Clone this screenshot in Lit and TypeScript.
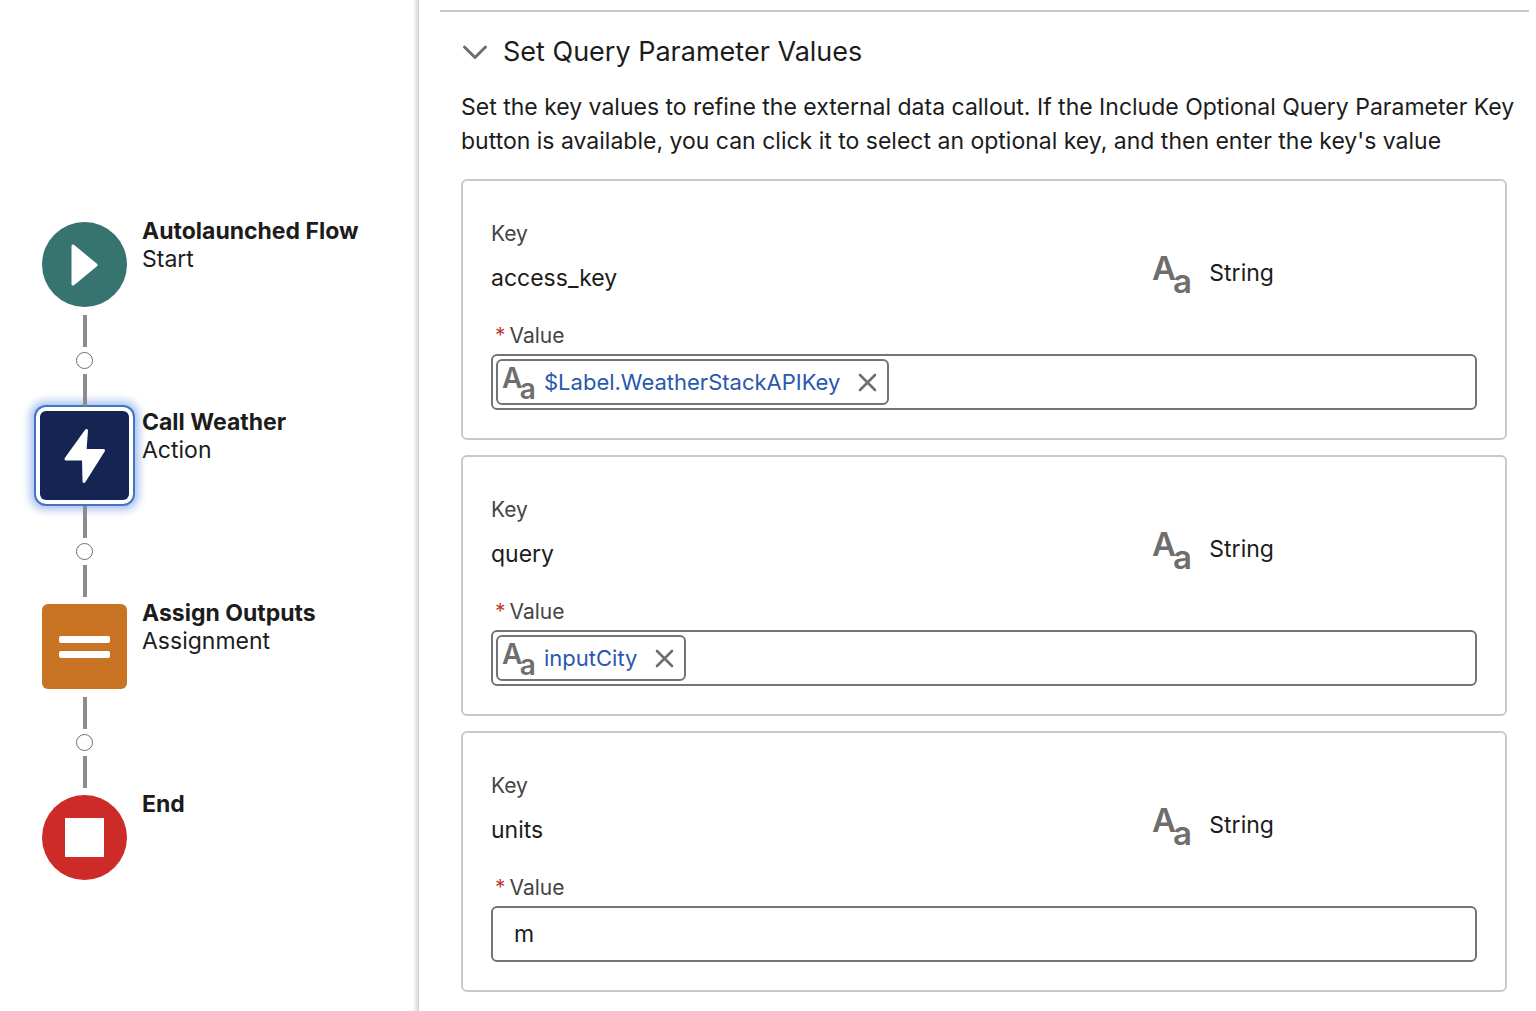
import { LitElement, html, css, svg, nothing } from "lit";
import { customElement, property } from "lit/decorators.js";
import { classMap } from "lit/directives/class-map.js";

type NodeKind = "start" | "action" | "assignment" | "end";

interface FlowStep {
  kind: NodeKind;
  title: string;
  type?: string;
  selected?: boolean;
}

interface QueryParam {
  key: string;
  type: string;
  resource?: string;
  value?: string;
}

const STEPS: FlowStep[] = [
  { kind: "start", title: "Autolaunched Flow", type: "Start" },
  { kind: "action", title: "Call Weather", type: "Action", selected: true },
  { kind: "assignment", title: "Assign Outputs", type: "Assignment" },
  { kind: "end", title: "End" },
];

const PARAMS: QueryParam[] = [
  { key: "access_key", type: "String", resource: "$Label.WeatherStackAPIKey" },
  { key: "query", type: "String", resource: "inputCity" },
  { key: "units", type: "String", value: "m" },
];

const GLYPHS = {
  start: svg`<path d="M31 24 L54 43 L31 62 Z" fill="#fff" stroke="#fff" stroke-width="3" stroke-linejoin="round" />`,
  action: svg`<path d="M44.5 17.5 L24 46 H41.5 L42 68.5 L61.5 37.5 H43 Z" fill="#fff" stroke="#fff" stroke-width="3" stroke-linejoin="round" />`,
  assignment: svg`<rect x="17" y="32" width="51" height="7" rx="2" fill="#fff" /><rect x="17" y="47" width="51" height="7" rx="2" fill="#fff" />`,
  end: svg`<rect x="23" y="23" width="39" height="39" fill="#fff" />`,
};

const textTypeIcon = html`<svg class="text-type" viewBox="0 0 40 40" aria-hidden="true">
  <text class="glyph upper" x="0" y="27">A</text>
  <text class="glyph" x="21" y="40">a</text>
</svg>`;

@customElement("flow-canvas")
export class FlowCanvas extends LitElement {
  static styles = css`
    :host { display: block; }
    .steps { list-style: none; margin: 0; padding: 0; }
    .row { display: flex; gap: 15px; align-items: flex-start; }
    .node {
      flex: none;
      width: 85px;
      height: 85px;
      padding: 0;
      border: 0;
      border-radius: 6px;
      cursor: pointer;
    }
    .node svg { display: block; width: 85px; height: 85px; margin: auto; }
    .start { background: #37746f; border-radius: 50%; }
    .action { background: #142553; }
    .assignment { background: #c87424; }
    .end { background: #cd2b27; border-radius: 50%; }
    .selected {
      width: 89px;
      height: 89px;
      margin: -2px;
      box-shadow: 0 0 0 4px #fff, 0 0 0 6px #4472c4, 0 0 8px 10px #a9c2ee;
    }
    .title, .type { margin: 0; font-size: 23px; line-height: 28px; color: #1c1c1c; }
    .text { margin-top: -5px; }
    .title { font-weight: 700; }
    .link {
      position: relative;
      z-index: 1;
      display: flex;
      flex-direction: column;
      align-items: center;
      gap: 5px;
      width: 85px;
      padding: 8px 0 7px;
    }
    .line { width: 4px; height: 32px; background: #8c8c8c; }
    .add {
      box-sizing: border-box;
      width: 17px;
      height: 17px;
      padding: 0;
      border: 1px solid #6f6f6f;
      border-radius: 50%;
      background: #fff;
    }
  `;

  render() {
    return html`<ol class="steps">
      ${STEPS.map(
        (step, i) => html`<li>
          <div class="row">
            <button
              class=${classMap({ node: true, [step.kind]: true, selected: !!step.selected })}
              aria-label=${step.title}
            >
              <svg viewBox="0 0 85 85" aria-hidden="true">${GLYPHS[step.kind]}</svg>
            </button>
            <div class="text">
              <p class="title">${step.title}</p>
              ${step.type ? html`<p class="type">${step.type}</p>` : nothing}
            </div>
          </div>
          ${i < STEPS.length - 1
            ? html`<div class="link">
                <span class="line"></span>
                <button class="add" aria-label="Add element"></button>
                <span class="line"></span>
              </div>`
            : nothing}
        </li>`
      )}
    </ol>`;
  }
}

@customElement("param-card")
export class ParamCard extends LitElement {
  @property({ attribute: false }) param!: QueryParam;

  static styles = css`
    :host {
      display: block;
      box-sizing: border-box;
      border: 2px solid #c9c9c9;
      border-radius: 6px;
      padding: 38px 28px 28px;
      font-size: 23px;
      line-height: 30px;
      color: #1c1c1c;
    }
    .top { display: grid; grid-template-columns: 2fr 1fr; align-items: end; }
    .key { margin: 0; display: grid; gap: 14px; }
    dt { font-size: 21px; color: #444; }
    dd { margin: 0; }
    .kind { display: flex; align-items: center; gap: 17px; padding-left: 4px; }
    .text-type { flex: none; width: 40px; height: 40px; overflow: visible; }
    .glyph { font-size: 33px; font-weight: 600; fill: #6e6e6e; }
    .label { display: flex; gap: 4px; padding: 28px 0 3px 4px; font-size: 21px; color: #444; }
    .required { color: #c23934; }
    .field {
      display: flex;
      box-sizing: border-box;
      height: 56px;
      padding: 3px;
      border: 2px solid #747474;
      border-radius: 6px;
      background: #fff;
    }
    .chip {
      display: flex;
      align-items: center;
      box-sizing: border-box;
      padding: 0 10px 0 4px;
      border: 2px solid #747474;
      border-radius: 6px;
      font-size: 22px;
    }
    .chip .text-type { width: 34px; height: 34px; }
    .chip a { margin: 0 18px 0 8px; color: #2a58ad; text-decoration: none; }
    .clear { display: flex; padding: 0; border: 0; background: none; cursor: pointer; }
    .clear svg { width: 19px; height: 19px; }
    input {
      flex: 1;
      min-width: 0;
      padding: 0 18px;
      border: 0;
      outline: 0;
      background: none;
      font: inherit;
      color: inherit;
    }
  `;

  render() {
    const { key, type, resource, value } = this.param;
    return html`
      <div class="top">
        <dl class="key">
          <dt>Key</dt>
          <dd>${key}</dd>
        </dl>
        <div class="kind">${textTypeIcon}<span>${type}</span></div>
      </div>
      <label class="label" for="value"><span class="required">*</span>Value</label>
      <div class="field">
        ${resource
          ? html`<span class="chip">
              ${textTypeIcon}<a href="#resource">${resource}</a>
              <button class="clear" aria-label="Clear value">
                <svg viewBox="0 0 19 19" aria-hidden="true">
                  <path d="M2 2 L17 17 M17 2 L2 17" stroke="#6e6e6e" stroke-width="2.6" stroke-linecap="round" />
                </svg>
              </button>
            </span>`
          : nothing}
        <input id="value" type="text" required .value=${value ?? ""} />
      </div>
    `;
  }
}

@customElement("app-root")
export class AppRoot extends LitElement {
  static styles = css`
    :host {
      display: grid;
      grid-template-columns: 419px minmax(0, 1fr);
      min-height: 100vh;
      background: #fff;
      font-family: Inter, "Liberation Sans", sans-serif;
      color: #1c1c1c;
    }
    .canvas {
      padding: 222px 0 0 42px;
      background: linear-gradient(to left, #d2d2d2, #fff 6px);
    }
    .panel { padding: 10px 7px 18px 21px; background: #fff; }
    .section { border-top: 2px solid #c9c9c9; padding: 20px 0 0 21px; }
    .heading { margin: 0; font-size: 27px; line-height: 40px; font-weight: 400; }
    .toggle {
      display: flex;
      align-items: center;
      gap: 15px;
      padding: 0 0 0 1px;
      border: 0;
      background: none;
      font: inherit;
      color: inherit;
      cursor: pointer;
    }
    .toggle svg { width: 26px; height: 18px; }
    .help { margin: 18px 0 21px; font-size: 23px; line-height: 34px; }
    .cards { display: grid; gap: 15px; margin-right: 22px; }
  `;

  render() {
    return html`
      <nav class="canvas" aria-label="Flow"><flow-canvas></flow-canvas></nav>
      <main class="panel">
        <section class="section">
          <h2 class="heading">
            <button class="toggle" aria-expanded="true">
              <svg viewBox="0 0 26 18" aria-hidden="true">
                <path d="M2.5 4 L13 14.5 L23.5 4" fill="none" stroke="#6e6e6e" stroke-width="3" stroke-linecap="round" stroke-linejoin="round" />
              </svg>
              Set Query Parameter Values
            </button>
          </h2>
          <p class="help">
            Set the key values to refine the external data callout. If the Include Optional Query Parameter Key
            button is available, you can click it to select an optional key, and then enter the key's value
          </p>
          <div class="cards">${PARAMS.map((p) => html`<param-card .param=${p}></param-card>`)}</div>
        </section>
      </main>
    `;
  }
}
